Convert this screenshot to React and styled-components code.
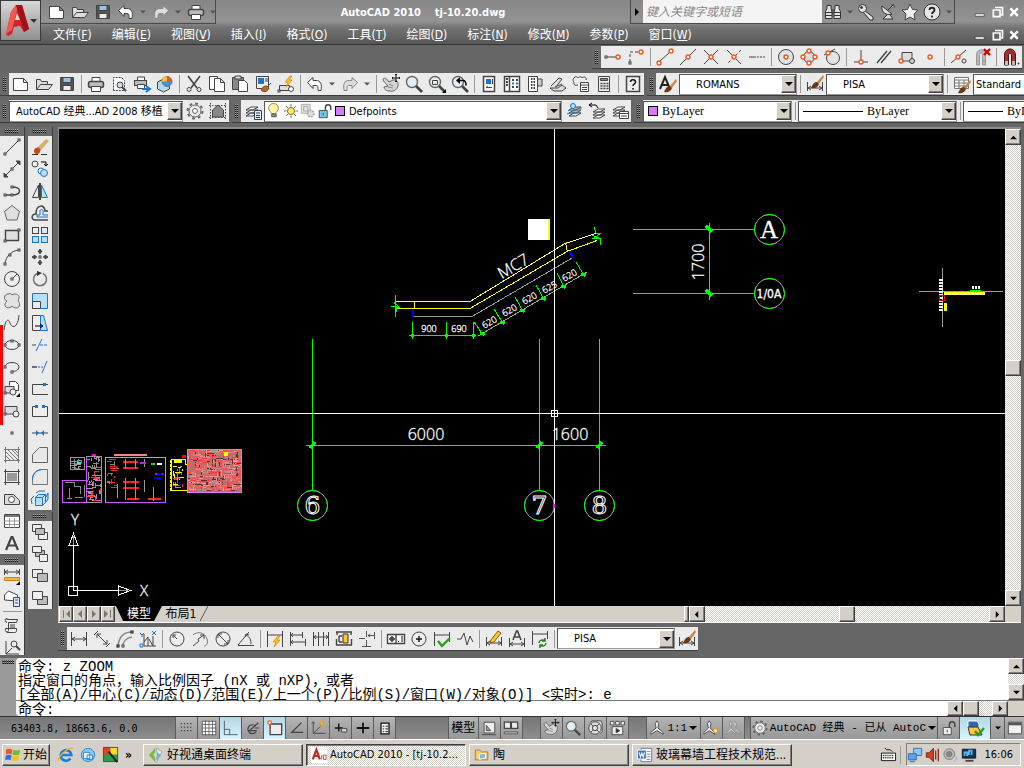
import { Fragment } from 'react'
import styled, { createGlobalStyle, css } from 'styled-components'

const UI = '"DejaVu Sans Condensed", "Noto Sans CJK SC", sans-serif'
const BLUE = '#1a74d0'
const ORANGE = '#f0581c'
const SKY = '#b5e0f7'

const GlobalStyle = createGlobalStyle`
  * { box-sizing: border-box; }
  body { margin: 0; background: #666; overflow: hidden; }
  button, input, select { font-family: inherit; }
`

const raised = css`
  background: #d4d0c8;
  border: 1px solid;
  border-color: #fff #404040 #404040 #fff;
  box-shadow: inset -1px -1px 0 #808080;
`

const dither = css`
  background: conic-gradient(#fff 25%, #d4d0c8 0 50%, #fff 0 75%, #d4d0c8 0) 0 0 / 2px 2px;
`

const gripDots = css`
  background: conic-gradient(#a8a8a8 25%, #111 0 50%, #5a5a5a 0) 0 0 / 2px 2px;
`

const Window = styled.div`
  display: flex;
  flex-direction: column;
  height: 100vh;
  background: #666;
  font-family: ${UI};
  font-size: 11px;
  color: #000;
`

/* ---------- title and menu ---------- */

const Header = styled.header`
  display: flex;
  height: 45px;
  flex: none;
  border-bottom: 1px solid #333;
  background: linear-gradient(#868686, #949494 48%, #747474 62%, #585858);
`

const AppButton = styled.button`
  display: flex;
  align-items: center;
  justify-content: center;
  width: 41px;
  height: 41px;
  padding: 0;
  border: 1px solid #3a3a3a;
  background: linear-gradient(#d8d8d8, #8f8f8f);
`

const HeaderBody = styled.div`
  flex: 1;
  min-width: 0;
`

const TitleRow = styled.div`
  display: flex;
  align-items: stretch;
  height: 24px;
`

const QuickAccess = styled.div`
  display: flex;
  align-items: center;
  width: 175px;
  padding-left: 4px;
  border: 1px solid #4a4a4a;
  border-top: 0;
  border-left: 0;
`

const Title = styled.h1`
  flex: 1;
  margin: 0;
  padding-top: 1px;
  font-size: 11px;
  line-height: 24px;
  text-align: center;
  white-space: pre;
  color: #fff;
`

const SearchBox = styled.div`
  display: flex;
  align-items: center;
  border: 1px solid #4a4a4a;
  border-top: 0;
`

const SearchInput = styled.input`
  width: 179px;
  height: 23px;
  padding: 0 3px;
  border: 0;
  background: #f4f4f4;
  font-size: 12px;
  font-style: italic;

  &::placeholder { color: #888; opacity: 1; }
`

const WindowControls = styled.div`
  display: flex;
  align-items: center;
  gap: 1px;
  padding: 0 2px 0 17px;
`

const MenuRow = styled.nav`
  display: flex;
  align-items: center;
  height: 20px;
  padding: 2px 0 0 12px;
`

const MenuItem = styled.button`
  padding: 0;
  margin-right: 20px;
  border: 0;
  background: none;
  color: #fff;
  font-size: 12px;
  line-height: 18px;
  white-space: nowrap;
`

const Spacer = styled.div`
  flex: 1;
`

/* ---------- toolbars ---------- */

const DockRows = styled.div`
  display: grid;
  gap: 4px;
  flex: none;
  padding: 1px 0 4px;
`

const DockRow = styled.div`
  display: flex;
  justify-content: ${p => (p.$end ? 'flex-end' : 'flex-start')};
  gap: 3px;
  height: 23px;
  padding-right: ${p => (p.$end ? '2px' : '0')};
  overflow: hidden;
`

const Bar = styled.div`
  display: flex;
  flex: none;
  flex-direction: ${p => (p.$vertical ? 'column' : 'row')};
  align-items: center;
  background: #ebebeb;
  border-${p => (p.$vertical ? 'right' : 'bottom')}: 1px solid #3c3c3c;
`

const Grip = styled.div`
  display: flex;
  flex: none;
  align-self: stretch;
  width: ${p => (p.$vertical ? 'auto' : '9px')};
  height: ${p => (p.$vertical ? '9px' : 'auto')};
  padding: ${p => (p.$vertical ? '2px 6px 3px 4px' : '4px 3px 4px 2px')};
  background: #6a6a6a;

  &::before {
    content: '';
    flex: 1;
    ${gripDots}
  }
`

const IconButton = styled.button`
  display: flex;
  flex: none;
  align-items: center;
  justify-content: center;
  width: ${p => p.$w || 23}px;
  height: 22px;
  padding: 0;
  border: 0;
  background: none;
`

const Divider = styled.div`
  flex: none;
  width: ${p => (p.$vertical ? '19px' : '6px')};
  height: ${p => (p.$vertical ? '5px' : '18px')};
  background: linear-gradient(#999, #999) center / ${p => (p.$vertical ? '100% 1px' : '1px 100%')} no-repeat;
`

const Glyph = styled.svg`
  display: block;
  flex: none;
  overflow: visible;
  fill: none;
  stroke: #444;
`

const Combo = styled.div`
  display: flex;
  flex: none;
  align-items: center;
  width: ${p => p.$w}px;
  height: 21px;
  border: 1px solid;
  border-color: #555 #999 #999 #555;
  background: #fff;
`

const ComboSelect = styled.select`
  appearance: none;
  flex: 1;
  min-width: 0;
  height: 19px;
  padding: 0 0 0 ${p => p.$pad || 4}px;
  border: 0;
  outline: 0;
  background: none;
  color: #000;
  font-family: ${p => (p.$serif ? '"Liberation Serif", serif' : 'inherit')};
  font-size: ${p => (p.$serif ? 12 : 11)}px;
`

const Arrow = styled.span`
  display: flex;
  flex: none;
  align-items: center;
  justify-content: center;
  width: 15px;
  height: 18px;
  ${raised}

  &::after {
    content: '';
    border: 4px solid transparent;
    border-bottom: 0;
    border-top-color: #000;
  }
`

const Swatch = styled.span`
  flex: none;
  width: 10px;
  height: 10px;
  margin-left: ${p => p.$gap || 2}px;
  border: 1px solid #000;
  background: #d97bff;
`

const Rule = styled.span`
  flex: none;
  width: ${p => p.$w}px;
  height: 1px;
  margin-left: 4px;
  background: #000;
`

/* ---------- workspace ---------- */

const Workspace = styled.main`
  position: relative;
  display: flex;
  flex: 1;
  min-height: 0;
  overflow: hidden;
  border-bottom: 3px solid #666;
`

const SideDock = styled.div`
  display: flex;
  flex: none;
  flex-direction: column;
  gap: 2px;
  width: 25px;
  margin-right: 3px;
`

const RecordMark = styled.div`
  position: absolute;
  left: 0;
  top: 198px;
  width: 3px;
  height: 100px;
  background: #f00;
`

const Document = styled.section`
  display: flex;
  flex: 1;
  flex-direction: column;
  min-width: 0;
  margin: 0 3px 0 2px;
`

const Frame = styled.div`
  display: flex;
  flex: 1;
  min-height: 0;
  border: solid #8c8c8c;
  border-width: 2px 0 0 1px;
`

const Canvas = styled.svg`
  display: block;
  flex: 1;
  min-width: 0;
  height: 100%;
  background: #000;
  fill: none;
`

const ScrollTrack = styled.div`
  display: flex;
  flex: none;
  flex-direction: ${p => (p.$vertical ? 'column' : 'row')};
  width: ${p => p.$w || 'auto'};
  ${dither}
`

const ScrollButton = styled.button`
  display: flex;
  flex: none;
  align-items: center;
  justify-content: center;
  width: ${p => p.$w || 16}px;
  height: ${p => p.$h || 16}px;
  padding: 0;
  ${raised}
`

const TabRow = styled.div`
  display: flex;
  flex: none;
  height: 17px;
  border-bottom: 1px solid #fff;
  background: #d4d0c8;
`

const TabArrows = styled.div`
  display: flex;
  padding-left: 1px;
`

const Tab = styled.button`
  height: 15px;
  padding: 0;
  border: 0;
  font-size: 12px;
  line-height: 14px;
  ${p => p.$active ? css`
    width: 46px;
    margin-left: 1px;
    clip-path: polygon(0 0, 100% 0, calc(100% - 8px) 100%, 7px 100%);
    background: #000;
    color: #fff;
  ` : css`
    width: 46px;
    padding-right: 8px;
    background: linear-gradient(to bottom right, transparent 44%, #555 50%, transparent 56%) right / 8px 15px no-repeat;
    color: #000;
  `}
`

const Splitter = styled.div`
  width: 5px;
  ${raised}
`

const Corner = styled.div`
  width: ${p => p.$w || 16}px;
  background: #d4d0c8;
`

const DimensionDock = styled.div`
  display: flex;
  flex: none;
  height: 24px;
  margin: 4px 0;
`

/* ---------- command line ---------- */

const Command = styled.section`
  display: flex;
  flex: none;
  height: 58px;
  background: #9a9a9a;
`

const CommandGrip = styled.div`
  flex: none;
  width: 16px;
  padding: 2px;

  &::before {
    content: '';
    display: block;
    height: 4px;
    ${gripDots}
  }
`

const CommandBody = styled.div`
  flex: 1;
  min-width: 0;
  background: #fff;
  border-radius: 4px 0 0 4px;
`

const History = styled.div`
  display: flex;
  height: 43px;
  border-bottom: 1px solid #777;
`

const HistoryText = styled.div`
  flex: 1;
  padding-left: 2px;
`

const Line = styled.p`
  display: flex;
  align-items: baseline;
  margin: 0;
  height: 14px;
  line-height: 14px;
  white-space: pre;
`

const Han = styled.span`
  font-family: "Noto Sans CJK SC", sans-serif;
  font-size: 14px;
`

const Latin = styled.span`
  font-family: "Liberation Mono", monospace;
  font-size: 14px;
`

const Prompt = styled.div`
  display: flex;
  height: 15px;
  padding-left: 2px;
  line-height: 15px;
`

const PromptInput = styled.input`
  flex: 1;
  min-width: 0;
  border: 0;
  outline: 0;
  background: none;
`

/* ---------- status bar ---------- */

const StatusBar = styled.footer`
  display: flex;
  flex: none;
  height: 23px;
  border-top: 1px solid #333;
  background: linear-gradient(#767676, #8e8e8e);
`

const Coordinates = styled.output`
  width: 175px;
  padding-left: 11px;
  font: 10px/24px "DejaVu Sans Mono", monospace;
`

const StatusButton = styled.button`
  display: flex;
  flex: none;
  align-items: center;
  justify-content: center;
  gap: 2px;
  min-width: ${p => p.$w || 22}px;
  padding: 0 1px;
  border: 0;
  border-left: 1px solid #5c5c5c;
  background: ${p => (p.$on ? 'linear-gradient(#b5d6e4, #d8f4ff)' : 'linear-gradient(#b4b4b4, #979797)')};
  font-size: 12px;
  line-height: 20px;
  white-space: nowrap;
`

const StatusGap = styled.div`
  flex: ${p => (p.$grow ? 1 : 'none')};
  width: ${p => p.$w || 0}px;
  border-left: 1px solid #5c5c5c;
`

const MonoLabel = styled.span`
  font-family: "Liberation Mono", "Noto Sans CJK SC", monospace;
  font-size: 11px;
`

/* ---------- taskbar ---------- */

const Taskbar = styled.footer`
  display: flex;
  flex: none;
  align-items: center;
  height: 29px;
  padding: 1px 3px 0 2px;
  border-top: 1px solid #fff;
  background: #d4d0c8;
  font-size: 12px;
`

const StartButton = styled.button`
  display: flex;
  align-items: center;
  gap: 1px;
  width: 48px;
  height: 22px;
  padding: 0 2px;
  font-size: 12px;
  line-height: 18px;
  white-space: nowrap;
  ${raised}
`

const QuickLaunch = styled.div`
  display: flex;
  align-items: center;
  gap: 6px;
  width: 93px;
  padding-left: 8px;
`

const Task = styled.button`
  display: flex;
  align-items: center;
  gap: 3px;
  flex: 0 1 160px;
  min-width: 0;
  height: 22px;
  margin-right: 3px;
  padding: 0 4px;
  overflow: hidden;
  font-size: ${p => (p.$latin ? 11 : 12)}px;
  line-height: 18px;
  white-space: nowrap;
  ${raised}
  ${p => p.$active && css`
    ${dither}
    border-color: #404040 #fff #fff #404040;
    box-shadow: inset 1px 1px 0 #808080;
  `}
`

const Tray = styled.div`
  display: flex;
  align-items: center;
  gap: 2px;
  height: 23px;
  margin-left: 3px;
  padding: 0 7px 0 0;
  border: 1px solid;
  border-color: #808080 #fff #fff #808080;
`

const Clock = styled.time`
  padding-left: 5px;
  font-size: 11px;
`

/* ---------- icons, all on an 18x18 grid ---------- */

const dot = (x, y, c = '#444', r = 1) => (
  <rect x={x - r} y={y - r} width={r * 2} height={r * 2} fill="#fff" stroke={c} />
)
const ring = (x, y, r = 2) => <circle cx={x} cy={y} r={r} fill="#fff" stroke={ORANGE} strokeWidth="1.4" />
const stack = (x = 0) => (
  <g transform={`translate(${x} 0)`} fill="#fff">
    <path d="M4 14l5-3h7l-5 3zM4 11l5-3h7l-5 3zM4 8l5-3h7l-5 3z" />
  </g>
)
const dimBar = (y = 14) => <path d={`M1.5 ${y - 6}v9M16.5 ${y - 6}v9M2 ${y}h14M5 ${y - 2}l-3 2 3 2M13 ${y - 2}l3 2-3 2`} />
const brush = (
  <g stroke="none">
    <path d="M17 0l-6 7 2 2 5-7z" fill="#c98a48" />
    <path d="M11 7c-3 0-4 2-6 6 4 1 7-1 8-4z" fill="#6a3814" />
  </g>
)
const bolt = <path d="M13 1L8 7h3l-2 5 6-7h-3l3-4z" fill="#ffc629" stroke="#e07b00" strokeWidth=".7" />
const lens = <g><circle cx="7" cy="7" r="5.5" fill="#e4eef4" stroke="#666" strokeWidth="1.4" /><path d="M11 11l6 6" strokeWidth="2.6" /></g>

const icons = {
  new: <path d="M1.5 15.5v-12h10l4 4v8zM11.5 3.5v4h4" fill="#fff" />,
  open: <path d="M1.5 14.5v-10h4l1 2h6v3M1.5 14.5l4-5h12l-4 5z" fill="#ddd" />,
  save: <g><path d="M2.5 2.5h13v13h-13z" fill="#555" /><path d="M5 2.5h8v5h-8z" fill="#9cc3dc" /><path d="M5 10.500h8v5h-8z" fill="#eee" /></g>,
  print: <g><path d="M5 6V2.500h8V6" fill="#fff" /><rect x="1.500" y="6.500" width="15" height="6" rx="2" fill="#bbb" strokeWidth="1.500" /><path d="M4.500 11.500h9v5h-9z" fill="#fff" /></g>,
  preview: <g><path d="M3.500 15.500v-13h8l3 3v10z" fill="#fff" strokeDasharray="2 1" /><circle cx="10" cy="10" r="3" fill="#cde" /><path d="M12 12l4 4" strokeWidth="2" /></g>,
  publish: <g><rect x="1.500" y="5.500" width="12" height="5" fill="#bbb" /><path d="M4.500 5v-3h7v3M4.500 9.500h7v4h-7z" fill="#fff" /><path d="M9 14h7M13 11l4 3-4 3" stroke={BLUE} strokeWidth="2" /></g>,
  dwf: <g><path d="M1.500 7l6-3 6 3v7l-6 3-6-3z" fill="#b5d8ec" /><circle cx="11" cy="6.500" r="5" fill="#3a9ad8" stroke="#777" /><path d="M11 6.500V1.500a5 5 0 0 1 5 5z" fill="#f05030" stroke="none" /><path d="M11 6.500H6a5 5 0 0 1 5-5z" fill="#ffc629" stroke="none" /></g>,
  cut: <g><path d="M3 1l9 12M15 1L6 13" strokeWidth="1.600" /><circle cx="4" cy="14.500" r="2" /><circle cx="14" cy="14.500" r="2" /></g>,
  copyclip: <g fill="#fff"><path d="M1.500 1.500h8v13h-8z" /><path d="M6.500 3.500h6l4 4v9h-10zM12.500 3.500v4h4" /></g>,
  paste: <g><path d="M1.500 2.500h11v12h-11z" fill="#888" /><path d="M4 1h6v3h-6z" fill="#ddd" /><path d="M7.500 5.500h6l3 3v8h-9z" fill="#fff" /></g>,
  match: <g><path d="M2.500 1.500h12v12h-12z" fill="#eee" /><path d="M4 3h6v6h-6z" fill={BLUE} stroke="none" /><path d="M11 4h3M11 6h3" /><path d="M17 8l-4 4M13 11c-4 0-5 2-6 4 2 2 6 3 8-2z" fill="#b5672d" stroke="#864818" /></g>,
  blockedit: <g><path d="M2.500 15.500v-5h10v5z" fill="#ddd" /><circle cx="14" cy="14" r="2.500" fill="#fff" />{dot(2, 16)}{bolt}</g>,
  undo: <path d="M1.500 7.500l5.500-5v3h3c5 0 6 4 5 10h-3c0-4 0-5-2-5H7v3z" fill="#fff" />,
  redo: <path d="M16.500 7.500l-5.500-5v3H8c-5 0-6 4-5 10h3c0-4 0-5 2-5h3v3z" fill="#ddd" stroke="#888" />,
  pan: <g><path d="M1 4c2-2 4 0 6 3l4-2c3-1 6 2 5 6-1 4-5 6-9 5-4 0-5-3-5-4l4-1C4 8 1 7 1 4z" fill="#d4d4d4" strokeWidth="1" stroke="#666" /><path d="M7 9l4 2M6 12l5 1" stroke="#888" /><path d="M14 -1v8M10 3h8M13 0l1-1 1 1M13 6l1 1 1-1M11 2l-1 1 1 1M17 2l1 1-1 1" stroke="#111" /></g>,
  zoom: lens,
  zoomwin: <g>{lens}<path d="M4.500 5.500h5v4h-5z" /><path d="M18 14v4h-4z" fill="#000" stroke="none" /></g>,
  zoomprev: <g>{lens}<path d="M7 5.500h5c2 0 3 2 3 5" stroke="#000" strokeWidth="1.500" /><path d="M9 2v7L5 5.500z" fill="#000" stroke="none" /></g>,
  props: <g><path d="M3.500 1.500h11v15h-11z" fill="#fff" strokeWidth="1.500" /><path d="M6 4h5v5h-5z" fill={BLUE} stroke="none" /><path d="M12.500 4v5M6 12.500h6M6 12.500l2-1" /></g>,
  design: <g><path d="M1.500 1.500h15v15h-15zM6.500 1.500v15" fill="#fff" strokeWidth="1.500" /><path d="M3 4h2M3 7h2M3 10h2M9 5h2M13 5h2M9 12h2M13 12h2" strokeWidth="2" /><path d="M9 8.500h2M13 8.500h2" stroke={BLUE} strokeWidth="2" /></g>,
  palettes: <g><path d="M2.500 1.500h9v15h-9z" fill="#fff" /><path d="M5 4h4M5 7h4M5 10h4M5 13h4" strokeDasharray="1.500 1" strokeWidth="2" /><path d="M12 4h4v7h-4" fill="#ccc" /></g>,
  sheets: <path d="M1 13l4 3h8l4-3-4-3-4 3zM2 11l8-8 3 1-6 8M6 12l7-3" fill="#ddd" />,
  markup: <g><path d="M2 3c2-3 4 0 4 0s3-3 4 0c2-2 5-1 4 2M2 3c-2 2 0 4 0 5s0 3 4 2" /><path d="M8.500 7.500h8v9h-8zM8.500 10h8M10 12.500h5M10 14.500h5" fill="#fff" /></g>,
  calc: <g><path d="M3.500 1.500h11v15h-11z" fill="#eee" /><path d="M5.500 3.500h7v2h-7z" fill="#888" /><path d="M5.500 8.500h8M5.500 11h8M5.500 13.500h8" strokeWidth="1.600" strokeDasharray="2 1" /></g>,
  help: <g><path d="M2.500 1.500h13v15h-13z" fill="#eee" strokeWidth="1.500" /><path d="M6.500 7c0-3 5-3 5 0 0 2-2.500 2-2.500 4M9 13v1.500" stroke="#111" strokeWidth="1.600" /></g>,
  textstyle: <g><path d="M1 14L6 2l5 12M3 10h6" strokeWidth="2" stroke="#222" /><g transform="translate(0 4)">{brush}</g></g>,
  dimstyle: <g>{dimBar(13)}{brush}</g>,
  tablestyle: <g><path d="M1.500 2.500h14v11h-14zM1.500 5h14M1.500 8h14M1.500 11h14M6 5v9M11 5v9" fill="#fff" stroke="#777" /><g transform="translate(0 5)">{brush}</g></g>,
  gear: <g><circle cx="9" cy="9" r="7.500" strokeDasharray="2.800 3.090" strokeWidth="2" stroke="#666" /><circle cx="9" cy="9" r="6" fill="#eee" stroke="#666" /><circle cx="9" cy="9" r="2.500" fill="#fff" stroke="#666" /></g>,
  home: <g><path d="M3.500 8L9 3l5.500 5v7h-11z" fill="#888" /><path d="M1.500 1v16M16.500 1v16M0 3.500h18M0 15.500h18" strokeDasharray="1.500 1.500" /></g>,
  layerprops: <g>{stack(-2)}<path d="M10.500 8.500h7v9h-7zM12 11h4M12 13.500h4M12 15.500h4" fill="#dfeaf5" stroke="#345" /></g>,
  layermatch: <g>{stack()}<path d="M3 9l5-3h9M2 12l5-2h8" stroke={BLUE} /><circle cx="8" cy="4" r="2.500" fill={SKY} stroke={BLUE} /></g>,
  layerprev: <g transform="translate(1 2)">{stack()}<path d="M0 1h7l2 3M3-1L0 1l3 2" stroke="#000" /></g>,
  layerstate: <g>{stack(-2)}<path d="M8.500 9.500h9v7h-9zM8.500 11.500h9M10 14h6" fill="#fff" /></g>,
  bulb: <g><path d="M6 12c0-2-3-3-3-6a5 5 0 0 1 11 0c0 3-3 4-3 6z" fill="#fff3a0" stroke="#8a8050" /><path d="M6.500 12.500h5v3h-5z" fill="#999" /></g>,
  sun: <g stroke="#6a6238"><circle cx="9" cy="9" r="4" fill="#ffe95e" /><path d="M9 1v3M9 14v3M1 9h3M14 9h3M3.500 3.500l2 2M12.500 12.500l2 2M14.500 3.500l-2 2M3.500 14.500l2-2" /></g>,
  vpfreeze: <g stroke="#aaa" fill="#e0e0e0"><path d="M1.500 1.500h10v10h-10zM4 4h5v5h-5z" /><circle cx="12" cy="12" r="3.500" strokeDasharray="2 1" strokeWidth="2" /></g>,
  unlock: <g><path d="M2.500 8.500h9v8h-9z" fill="#74c8f0" /><path d="M9.500 8V5c0-4 6-4 6 0v3" strokeWidth="1.600" /><path d="M7 11v3" /></g>,

  track: <g><path d="M2 9h10" />{dot(2, 9)}{ring(14, 9)}</g>,
  from: <g><path d="M3 14V4h9" strokeDasharray="3 2" />{dot(3, 15)}{ring(14, 4)}</g>,
  endpoint: <g><path d="M3 14L15 3" />{ring(3, 15)}{ring(15, 3)}</g>,
  midpoint: <g><path d="M1 17L17 1" />{ring(9, 9)}</g>,
  intersect: <g><path d="M2 2l14 14M16 2L2 16" />{ring(9, 9)}</g>,
  apparent: <g><path d="M2 2l14 14" /><path d="M16 2L2 16" strokeDasharray="3 2" />{ring(9, 9)}</g>,
  extension: <g><path d="M1 9h7" /><path d="M9 9h8" strokeDasharray="2 1" /></g>,
  center: <g><circle cx="9" cy="9" r="7.500" fill="#dfe3e6" />{ring(9, 9)}</g>,
  quadrant: <g><circle cx="9" cy="9" r="5.500" fill="#ddd" />{ring(9, 3)}{ring(9, 15)}{ring(3, 9)}{ring(15, 9)}</g>,
  tangent: <g><circle cx="10" cy="10" r="6.500" fill="#e4e4e4" /><path d="M1 7l11-6" />{ring(5, 5)}</g>,
  perp: <g><path d="M9 2v12M2 14h14" />{ring(9, 14)}</g>,
  parallel: <path d="M2 15L12 3M6 15L16 3" strokeWidth="1.400" />,
  insertion: <g><path d="M4 12V4.500h10V11" fill="#ddd" /><path d="M4 13h7" />{ring(3, 13)}<circle cx="14" cy="13" r="2.500" fill="#ccc" /></g>,
  node: ring(9, 9),
  nearest: <g><path d="M1 15l7-6 8-7" />{ring(8, 9)}<circle cx="14" cy="13" r="2" /></g>,
  nosnap: <g stroke="#999"><path d="M3.500 17V7c0-7 9-7 9 0v10h-3V7c0-3-3-3-3 0v10z" fill="#bbb" /><path d="M3 13h4M9 13h4" /><path d="M11 1l6 6M17 1l-6 6" stroke="#d40000" strokeWidth="2.400" /></g>,
  magnet: <g><path d="M2.500 17V7c0-8 11-8 11 0v10h-4V7c0-2-3-2-3 0v10z" fill="#a03030" stroke="#4a1515" /><path d="M3 13h3v4H3zM10 13h3v4h-3z" fill="#bbb" stroke="none" /><path d="M16 15h1v1h-1z" /></g>,

  line: <g><path d="M2 16L16 2" />{dot(2, 16)}{dot(16, 2)}</g>,
  xline: <g><path d="M2 16L16 2" /><path d="M1 17v-4l4 4zM17 1v4l-4-4z" fill="#444" />{dot(9, 9)}</g>,
  pline: <g><path d="M2 13h7c10 0 10-8 0-8" strokeWidth="1.400" />{dot(2, 13)}{dot(9, 13)}{dot(9, 5)}</g>,
  polygon: <path d="M9 1.500l7.500 6L14 16H4L1.500 7.500z" fill="#dfdfdf" stroke="#666" />,
  rect: <g><path d="M2.500 4.500h13v10h-13z" fill="#dfe0e2" strokeWidth="1.400" />{dot(2, 15)}{dot(16, 4)}</g>,
  arc: <g><path d="M2 16C3 8 8 3 16 2" />{dot(2, 16)}{dot(7, 7)}{dot(16, 2)}</g>,
  circle: <g><circle cx="9" cy="9" r="7.500" fill="#eee" /><path d="M9 9l5-5" />{dot(9, 9)}</g>,
  cloud: <path d="M5 2c2-1 4 0 4 1 2-2 8-1 7 3 0 1-1 2-1 3 2 1 3 7-2 7-2 0-3-1-4-2-2 3-8 2-7-2 0-1 1-2 2-3C0 8 1 2 5 2z" fill="#e2e2e2" stroke="#666" />,
  spline: <path d="M1 16C2 7 5 3 7 9s8 5 9-8" />,
  ellipse: <g><ellipse cx="9" cy="9" rx="7" ry="4.500" fill="#eee" />{dot(2, 9)}{dot(16, 9)}{dot(9, 5)}</g>,
  ellipsearc: <g><path d="M2 9c0-6 14-6 14 0 0 3-4 5-7 4" />{dot(2, 9)}{dot(9, 14)}</g>,
  insert: <g><path d="M6.500 5.500v-4h6l3 3v6h-4" fill="#fff" /><path d="M2 13V6.500h9V13z" fill="#ddd" /><circle cx="10" cy="12" r="3" fill="#eee" />{dot(2, 13)}<path d="M17 13v4h-4z" fill="#000" stroke="none" /></g>,
  block: <g><path d="M2 12V4.500h12V10M2 12h8" fill="#ddd" /><circle cx="13" cy="12" r="3" fill="#eee" />{dot(2, 12)}</g>,
  point: dot(9, 9),
  hatch: <g><path d="M2.500 1v16M15.500 1v16M1 3.500h16M1 14.500h16" stroke="#777" /><path d="M3 6l8 8M3 10l4 4M5 4l10 10M9 4l6 6M12 4l3 3" strokeWidth=".7" /></g>,
  gradient: <g><path d="M4 5h10v8H4z" fill="#999" stroke="none" /><path d="M2.500 1v16M15.500 1v16M1 3.500h16M1 14.500h16" /></g>,
  region: <g><path d="M1.500 14.500v-10h9l6 6v4z" fill="#ddd" /><circle cx="8.500" cy="9.500" r="3" fill="#fff" /></g>,
  table: <g><path d="M1.500 2.500h15v13h-15z" fill="#fff" /><path d="M2 3h14v2H2z" fill="#777" stroke="none" /><path d="M1.500 9h15M1.500 12.500h15M6.500 6v10M11.500 6v10" stroke="#999" /></g>,
  text: <path d="M3 16L8.500 3h1L15 16M5.500 11.500h7" strokeWidth="2.200" />,
  distance: <g><path d="M1.500 2v6M16.500 2v6M2 5h14M5 3L2 5l3 2M13 3l3 2-3 2" /><path d="M1.500 10.500h15v3h-15z" fill="#f7b640" stroke="#d08010" /><path d="M17 14v4h-4z" fill="#000" stroke="none" /></g>,
  area: <g><path d="M1.500 11V6l4-4 9 4v6z" fill="#fff" /><path d="M10.500 8.500h6v9h-6zM12 11h3M12 14h3" fill="#dfeaf5" stroke="#347" /></g>,
  list: <path d="M3.500 3.500h11l-1 3h-8v8c0 2-3 2-3 0v-2h11v2c0 2-1 2-3 2H4M5 3.500c-3-3-4 2-1 3M7 9h5M7 11h5" fill="#eee" />,
  locate: <g><path d="M3 3v13h13M3 16l6-6" /><circle cx="11" cy="6" r="3" /><path d="M13 8l4 4" strokeWidth="2" /></g>,

  erase: <g stroke="none"><path d="M15 1l3 2-8 9-3-3z" fill="#d9b060" /><path d="M7 9l3 3-2 2-4-3z" fill="#6a6a5a" /><circle cx="6" cy="13" r="3" fill="#cf4514" /><path d="M1 16.500h16" stroke="#333" strokeDasharray="6 3" /></g>,
  copy: <g><circle cx="4" cy="4" r="3" /><path d="M10 2h5v3M13 4l2 2 2-2" stroke="#000" /><circle cx="10" cy="11" r="3" fill="#fff" stroke={BLUE} /><circle cx="13" cy="13" r="3.500" fill={SKY} stroke={BLUE} /></g>,
  mirror: <g><path d="M7.500 3v12.500H1.500z" fill="#eee" /><path d="M10.500 3v12.500h6z" fill={SKY} stroke={BLUE} /><path d="M9 1v17" stroke="#000" strokeWidth="1.400" /></g>,
  offset: <g><path d="M17 16H4c-4 0-4-6 1-6C5 0 14 0 14 7h3" strokeWidth="1.500" /><path d="M17 13H6v-2h3V7c0-2 3-2 3 0v4h5" stroke={BLUE} /></g>,
  array: <g><rect x="1.500" y="1.500" width="6" height="6" fill="#eee" /><rect x="10.500" y="1.500" width="6" height="6" fill="#dde8f0" /><rect x="1.500" y="10.500" width="6" height="6" fill={SKY} stroke={BLUE} /><rect x="10.500" y="10.500" width="6" height="6" fill={SKY} stroke={BLUE} /></g>,
  move: <g fill="#444"><path d="M9 1l2 3H7zM9 17l2-3H7zM1 9l3-2v4zM17 9l-3-2v4z" /><path d="M9 3v3M9 12v3M3 9h3M12 9h3" strokeWidth="1.600" />{dot(9, 9)}</g>,
  rotate: <g><path d="M12 3.500a6.500 6.500 0 1 1-6 0" stroke="#777" strokeWidth="1.600" /><path d="M6 1v5l5-3z" fill="#333" stroke="none" /></g>,
  scale: <g><path d="M1.500 1.500h15v15h-15z" fill={SKY} stroke={BLUE} /><path d="M1.500 9.500h8v7h-8z" fill="#e8e8f0" /></g>,
  stretch: <g><path d="M1.500 1.500h8v15h-8z" fill="#eee" /><path d="M9.500 1.500h3l4 15h-7z" fill={SKY} stroke={BLUE} /><path d="M4 12h7M9 10l3 2-3 2" stroke="#000" /></g>,
  trim: <g><path d="M1 9h4" /><path d="M5 15l6-12" stroke={BLUE} /><path d="M9 9h8" stroke={BLUE} strokeDasharray="3 1" /></g>,
  extend: <g><path d="M1 9h5" strokeWidth="1.500" /><path d="M7 9h5" stroke={BLUE} strokeDasharray="2 1" /><path d="M11 15l5-12" stroke={BLUE} /></g>,
  breakpt: <g><path d="M17 4.500H1.500v10H17" /><path d="M12 3h3v3h-3z" fill={BLUE} stroke="none" /></g>,
  break: <g><path d="M4 4.500H1.500v10h15v-10H14" fill="#eee" /><path d="M4 3h3v3H4zM11 3h3v3h-3z" fill={BLUE} stroke="none" /></g>,
  join: <g><path d="M1 9h16" /><path d="M5 6l3 3-3 3zM13 6l-3 3 3 3z" fill={BLUE} stroke="none" /></g>,
  chamfer: <path d="M1.500 16.500v-8l7-7h8v15z" fill="#e8e8e8" stroke="#666" />,
  fillet: <g><path d="M1.500 16.500v-6c0-5 4-9 9-9h6v15z" fill="#e8e8e8" stroke="#777" /><path d="M1.500 12c0-6 4-10 10-10.500" stroke={BLUE} /></g>,
  explode: <g fill={SKY} stroke={BLUE}><path d="M4.500 7.500h7v8h-7zM4.500 7.500l3-3h7l-3 3M11.500 15.500l3-3v-8" /><path d="M1 14l-1-5 3-3M15 7l2-4v6l-2 3M5 3l3-2h6" /></g>,
  front: <g fill="#eee"><path d="M1.500 1.500h9v7h-9z" /><path d="M7.500 9.500h9v7h-9z" /><path d="M4.500 5.500h9v6h-9z" fill="#bbb" /></g>,
  back: <g fill="#eee"><path d="M4.500 5.500h9v6h-9z" fill="#bbb" /><path d="M1.500 1.500h9v6h-9z" /><path d="M8.500 9.500h8v7h-8z" /></g>,
  above: <g fill="#eee"><path d="M1.500 2.500h10v8h-10z" /><path d="M6.500 6.500h10v8h-10z" fill="#bbb" /></g>,
  under: <g fill="#bbb"><path d="M6.500 7.500h10v8h-10z" /><path d="M1.500 2.500h10v8h-10z" fill="#eee" /></g>,

  dlinear: <path d="M1.500 2v14M16.500 2v14M2 9h14M5 7L2 9l3 2M13 7l3 2-3 2" />,
  daligned: <g><path d="M4 4l10 10M4 8V4h4M14 10v4h-4" /><path d="M5 1L1 5M17 13l-4 4" /></g>,
  darc: <g><path d="M2 16C3 7 8 2 16 2M7 16c0-4 3-8 9-9" stroke="#888" strokeWidth="1.500" />{dot(2, 16, '#111')}{dot(16, 2, '#111')}{dot(7, 16)}</g>,
  dordinate: <g><path d="M5 4v12h12M5 12l4-5v9M10 9l4 7V6" /><path d="M1 3l2 2 2-2M3 5v2M1 14h3v3H1zM13 1l4 4M17 1l-4 4" stroke={BLUE} /></g>,
  dradius: <g><circle cx="9" cy="9" r="7" fill="#eee" /><path d="M9 9L5 5M5 8V5h3" /></g>,
  djog: <g><path d="M2 5c4-4 12-3 14 4s-3 7-3 7" stroke="#777" /><path d="M2 16l6-5-1-2 6-4M9 5h4v4" /></g>,
  ddiameter: <g><circle cx="9" cy="9" r="7" fill="#eee" /><path d="M4 4l10 10M4 8V4h4M14 10v4h-4" /></g>,
  dangular: <path d="M1 15.500h16M1 15L12 2M9 5c4 2 5 5 5 9M8 7l1-3 3 1" />,
  dquick: <g><path d="M1.500 1v16M16.500 1v16M2 5h14" /><g transform="translate(-1 5)">{bolt}</g></g>,
  dbaseline: <path d="M1.500 2v14M13.500 2v6M16.500 9v7M2 5h11M2 12h14M4 3L2 5l2 2M4 10l-2 2 2 2" />,
  dcontinue: <path d="M1.500 2v14M6.500 2v14M11.500 2v14M16.500 2v14M2 7h14M4 5L2 7l2 2M14 5l2 2-2 2" />,
  dspace: <g><path d="M1 2h16M1 15h16M2 2v3M16 2v3M4 6v6M4 6h3M4 12h3M1.500 9V15M16.500 9v6" strokeWidth="1.400" /><path d="M8 4h5v9H8z" fill="#ffc629" stroke="#333" /></g>,
  dbreak: <g><path d="M8.500 1v6M8.500 10v7M4 16.500h9M1 8.500h6M10 5.500h6M16.500 2v7M12 4l-2 1.500 2 1.500" stroke="#555" /></g>,
  tolerance: <g><path d="M.500 4.500h17v9h-17zM9 4.500v9" strokeWidth="1.400" fill="#fff" /><circle cx="5" cy="9" r="2" /><path d="M5 6v6M2 9h6M11 11.500h1M15 6v6" stroke="#111" /></g>,
  centermark: <g><circle cx="9" cy="9" r="7" fill="#eee" /><path d="M9 6v6M6 9h6" stroke="#111" strokeWidth="1.400" /></g>,
  inspect: <g><path d="M1.500 2v14M16.500 2v10M2 5h14" /><path d="M5 11l4 5 8-8" stroke="#2d9a20" strokeWidth="2.400" /></g>,
  jogline: <path d="M1 9h4l3-6 3 12 3-9 3 6" />,
  dimedit: <g>{dimBar(13)}<path d="M6 10l7-9 3 2-7 9-4 1z" fill="#ffc629" stroke="#8a5a10" /></g>,
  dimtext: <g>{dimBar(14)}<path d="M5 10L8.500 1h1L13 10M6 7h6" strokeWidth="1.600" /></g>,
  dimupdate: <g><path d="M1.500 1v14M16.500 1v8M2 4h14" /><path d="M8 13c0-3 4-4 6-2M15 13c0 3-4 4-6 2M14 8v3h-3M9 18v-3h3" stroke="#2c7a22" strokeWidth="1.400" /></g>,

  snap: <path d="M2 4h12M2 8h12M2 12h12" strokeDasharray="1.500 2" strokeWidth="1.500" />,
  grid: <path d="M1.500 1.500h15v15h-15zM5 1v16M9 1v16M13 1v16M1 5h16M1 9h16M1 13h16" fill="#fff" stroke="#444" strokeWidth=".8" />,
  ortho: <path d="M1.500 1v15.500h15M1.500 10.500h6v6" stroke="#456" />,
  polar: <path d="M16 9h-5M15 3L5 12h8M12 7a5 5 0 1 0 1 5" strokeWidth="1.400" />,
  osnap: <g><path d="M3.500 4.500h13v12h-13z" fill="#eee" strokeWidth="1.500" />{ring(3, 3)}</g>,
  otrack: <path d="M14 3L3 14h13" strokeWidth="1.400" />,
  ducs: <g><path d="M2.500 2v13h14M2.500 15L12 6M1 4l1.500-2L4 4" /><g transform="translate(3 -1) scale(.8)">{bolt}</g></g>,
  dyn: <g><path d="M2 9h9M6.500 4v9" strokeWidth="1.600" stroke="#111" /><path d="M9.500 9.500h6v4h-6z" fill="#ccc" /></g>,
  lwt: <path d="M2 9h14M9 3v12" stroke="#111" strokeWidth="2" />,
  qp: <g><path d="M4.500 3.500h9v12h-9z" fill="#eee" stroke="#111" strokeWidth="1.400" /><path d="M6.500 7h1.500M6.500 10h1.500M6.500 13h1.500M9.500 7h3M9.500 10h3M9.500 13h3" stroke="#111" /></g>,
  layout: <path d="M3.500 2.500h12v12h-12zM1 16.500h16M6 6v6h5z" fill="#eee" />,
  views: <g><path d="M1.500 2.500h7v7h-7zM9.500 2.500h7v7h-7z" fill="#eee" strokeWidth="1.400" /><path d="M1.500 13.500h15v2h-15z" fill="#eee" /></g>,
  wheel: <g fill="#ddd"><path d="M3 3l3-2h10l1 3v9l-3 3" /><circle cx="9" cy="9" r="7" /><circle cx="9" cy="9" r="3" /><path d="M4 4l3 3M14 4l-3 3M4 14l3-3M14 14l-3-3" /></g>,
  motion: <g fill="#eee"><path d="M1.500 1.500h4v4h-4zM7.500 1.500h4v4h-4zM13.500 1.500h4v4h-4zM3.500 7.500h12v9h-12z" /><path d="M8 9.500v5l4-2.500z" fill="#222" /></g>,
  anno: <path d="M9 1l2 3-1 5 6 5v2l-7-4-7 4v-2l6-5-1-5z" fill="#eee" />,
  annostar: <g><path d="M7 1l2 3-1 5 5 5v2l-6-4-6 4v-2l5-5-1-5z" fill="#eee" /><circle cx="14" cy="12" r="2.500" fill="#ffe070" stroke="#f08020" /></g>,
  annoauto: <path d="M6 1l2 3-1 5 5 5v2l-5-4-5 4v-2l4-5-1-5zM10 1l3 3-1 5 5 5v2l-4-3" fill="#ccc" stroke="#888" />,
  lock: <g><path d="M2.500 8.500h9v8h-9z" fill="#eee" /><path d="M9.500 8V5c0-4 6-4 6 0v3" strokeWidth="1.600" /><path d="M7 11v3" /></g>,
  drawing: <g><path d="M2 2h9l2 3v5H2z" fill="#2c68b8" stroke="#fff" /><path d="M2 8h10l4 8H4z" fill="#f8c93a" stroke="#333" /><path d="M9 12l3 4 6-7" stroke="#2d9a20" strokeWidth="2.400" /></g>,
  clean: <g><path d="M1.500 2.500h15v13h-15z" fill="#f2f2f2" /><path d="M2 3h14v3H2z" fill="#555" stroke="none" /></g>,

  binoculars: <g fill="#e0e0e0" stroke="#333"><path d="M3 2.500h4v3l1 3v7H1.500v-7l1.500-3zM11 2.500h4v3l1.500 3v7H10v-7l1-3zM8 7h2v3H8zM1.500 9.500H8M10 9.500h6.500M1.500 12.500H8M10 12.500h6.500" /></g>,
  key: <g fill="#e0e0e0" stroke="#333"><path d="M8 8l8 6v3h-3l-7-8" /><circle cx="5.500" cy="5.500" r="4" /><circle cx="4.500" cy="4.500" r="1" fill="#333" /></g>,
  satellite: <g fill="#e0e0e0" stroke="#333"><path d="M3 3c-1 6 4 10 10 8zM8 12l-4 4h10l-3-4" /><path d="M8 8l6-6M12 2h3v3" /></g>,
  star: <path d="M9 1l2.500 5.500 5.500.500-4 4 1 6-5-3-5 3 1-6-4-4 5.500-.500z" fill="#f2f2f2" stroke="#444" />,
  helpround: <g><circle cx="9" cy="9" r="8" fill="#e8e8e8" stroke="#333" /><path d="M6.500 7c0-3 5-3 5 0 0 2-2.500 2-2.500 4M9 12.500v2" stroke="#222" strokeWidth="1.800" /></g>,
  min: <path d="M2.500 10.500h11v3h-11z" fill="#fff" />,
  restore: <g stroke="#fff" strokeWidth="2"><path d="M7 4V3h8v9h-2" /><path d="M4 6h8v8H4z" /></g>,
  close: <path d="M4 4l9 9M13 4l-9 9" stroke="#fff" strokeWidth="3" />,

  windows: <g stroke="none"><path d="M1 4c3-2 5-1 7 0l-1 5c-2-1-4-1-6 0z" fill="#ee5b22" /><path d="M9 4c3 1 5 1 7 0l-1 5c-2 1-4 1-7 0z" fill="#6ebd2c" /><path d="M1 10c2-1 4-1 6 0l-1 5c-2-1-4-1-6 0z" fill="#2c72dc" /><path d="M8 10c3 1 5 1 7 0l-1 5c-2 1-4 1-7 0z" fill="#f8c018" /></g>,
  ie: <g><path d="M14 13a6 6 0 1 1 1-4H4" stroke="#1c7fe0" strokeWidth="3" /><path d="M1 16C-2 12 12-1 17 2" stroke="#f4b020" strokeWidth="1.500" /></g>,
  outlook: <g><circle cx="9" cy="9" r="7.500" fill="#8ccaf7" stroke="#2a7fd0" /><path d="M4 6h7v7H4zM8 9h6v5H8z" fill="#e9f5ff" stroke="#2a7fd0" /></g>,
  paint: <g><path d="M1.500 1.500h15v15h-15z" fill="#2a9e42" stroke="#444" /><path d="M2 2h7v7H2z" fill="#e84020" stroke="none" /><path d="M9 2h7v7H9z" fill="#ffd832" stroke="none" /><path d="M7 6l9 11" stroke="#222" strokeWidth="2" /></g>,
  remote: <g stroke="none"><path d="M8 1L1 9l7 8V12L6 9l2-3z" fill="#7cba3c" /><path d="M9 1l7 4-4 7-2 5h-2l3-8z" fill="#e8e8e8" stroke="#9aa" /><path d="M10 6l5 3-5 6z" fill="#6bb4dd" /></g>,
  folder: <g><path d="M1.500 14.500v-11h5l2 2h7v9z" fill="#f8d060" stroke="#a87820" /><path d="M6 8l7-1v5l-7 2z" fill="#7db9e8" stroke="#fff" /></g>,
  word: <g><path d="M4.500 1.500h12v15h-12z" fill="#fff" stroke="#5577aa" /><path d="M11 5h4M11 8h4M11 11h4M11 14h4" stroke="#77a" /><path d="M.500 3.500h10v10H.500z" fill="#3c72c0" stroke="#fff" /><path d="M2.500 6l1.500 5 1.500-4 1.500 4 1.500-5" stroke="#fff" strokeWidth="1.300" /></g>,
  cad: <g><path d="M0 0h18v18H0z" fill="#fff" stroke="none" /><path d="M2 14L6 3l4 11M3.500 10h5" stroke="#c62828" strokeWidth="2.400" /><path d="M12 9v5M14 9h3v5h-3z" stroke="#b44" /></g>,
  keyboard: <g stroke="#111"><path d="M1.500 7.500h15v8h-15z" fill="#fff" /><path d="M3 10h12M3 12.500h12" strokeDasharray="1 1" strokeWidth="1.500" /><path d="M5 2l2 2h4l2 2" /></g>,
  network: <g stroke="#2c68b8"><path d="M7.500 1.500h9v8h-9z" fill="#8cc8f0" /><path d="M1.500 7.500h9v7h-9zM3 16.500h6" fill="#5aa5e8" /></g>,
  volume: <g><path d="M1.500 6.500h3l5-5v15l-5-5h-3z" fill="#d04020" stroke="#702010" /><path d="M12 4v10M15 2v14" stroke="#902818" strokeWidth="1.500" /></g>,
  speaker: <g stroke="#777"><circle cx="7" cy="8" r="6" fill="#bbb" /><circle cx="7" cy="8" r="3" fill="#888" /><path d="M14 10c2 2 1 5-2 6" stroke="#99e" /></g>,
  monitor: <g><path d="M1.500 2.500h15v10h-15z" fill="#16315c" stroke="#111" /><path d="M4 10V6h3v4M9 9V4h3v5" stroke="#5ab8f8" strokeWidth="2" /><path d="M5 15.500h9" strokeWidth="2" /></g>
}

const Icon = ({ name, size = 18 }) => (
  <Glyph width={size} height={size} viewBox="0 0 18 18" aria-hidden="true">{icons[name]}</Glyph>
)

const caretPaths = {
  down: 'M0 2h8L4 6z',
  up: 'M0 6h8L4 2z',
  left: 'M6 0v8L2 4z',
  right: 'M2 0v8l4-4z',
  first: 'M8 0v8L4 4zM1 0h1v8H1z',
  last: 'M0 0v8l4-4zM6 0h1v8H6z'
}

const Caret = ({ dir = 'down', color = '#000', size = 8 }) => (
  <svg width={size} height={size} viewBox="0 0 8 8" aria-hidden="true"><path d={caretPaths[dir]} fill={color} /></svg>
)

// '|' is a divider, 'v' is a drop-down caret
const Tools = ({ items, vertical, w = 23, caret = 12 }) => items.split(' ').map((name, i) => {
  if (name === '|') return <Divider key={i} $vertical={vertical} />
  if (name === 'v') return <IconButton key={i} $w={caret} aria-label="More"><Caret color="#555" size={6} /></IconButton>
  return <IconButton key={i} $w={w} aria-label={name}><Icon name={name} /></IconButton>
})

const Picker = ({ label, value, w, pad, serif, children }) => (
  <Combo $w={w}>
    {children}
    <ComboSelect aria-label={label} $pad={pad} $serif={serif}><option>{value}</option></ComboSelect>
    <Arrow />
  </Combo>
)

const menus = [
  ['文件', 'F'], ['编辑', 'E'], ['视图', 'V'], ['插入', 'I'], ['格式', 'O'], ['工具', 'T'],
  ['绘图', 'D'], ['标注', 'N'], ['修改', 'M'], ['参数', 'P'], ['窗口', 'W']
]

const history = [
  '命令: z ZOOM',
  '指定窗口的角点，输入比例因子 (nX 或 nXP)，或者',
  '[全部(A)/中心(C)/动态(D)/范围(E)/上一个(P)/比例(S)/窗口(W)/对象(O)] <实时>: e'
]

const Mixed = ({ text }) => text.split(/([\u3000-\uffef]+)/).filter(Boolean).map((part, i) => (
  /[\u3000-\uffef]/.test(part) ? <Han key={i}>{part}</Han> : <Latin key={i}>{part}</Latin>
))

const Controls = () => (
  <WindowControls>
    {['min', 'restore', 'close'].map(name => (
      <IconButton key={name} $w={16} aria-label={name}><Icon name={name} size={15} /></IconButton>
    ))}
  </WindowControls>
)

/* ---------- drawing ---------- */

// small repeatable scatter of line work for the distant sheets
const scatter = (seed, x, y, w, h, count, colors) => {
  let s = seed
  const next = () => {
    s = (s * 16807) % 2147483647
    return s / 2147483647
  }
  return Array.from({ length: count }, (_, i) => {
    const flat = next() > 0.4
    const rw = flat ? 2 + Math.floor(next() * 6) : 1
    const rh = flat ? 1 : 2 + Math.floor(next() * 4)
    return (
      <rect
        key={i}
        x={x + Math.floor(next() * (w - rw))}
        y={y + Math.floor(next() * (h - rh))}
        width={rw}
        height={rh}
        fill={colors[Math.floor(next() * colors.length)]}
      />
    )
  })
}

const CadText = styled.text`
  fill: #fff;
  stroke: #fff;
  stroke-width: 0.3;
  font-family: ${p => p.$family || '"Open Sans", "Liberation Sans", sans-serif'};
  font-size: ${p => p.$size}px;
  font-weight: 300;
  text-anchor: middle;
`

const BubbleDigit = styled.text`
  fill: #000;
  stroke: #fff;
  font-family: "DejaVu Serif", serif;
  font-size: 25px;
  text-anchor: middle;
`

const bubbles = [
  { x: 312, y: 505, digit: '6' },
  { x: 539, y: 505, digit: '7' },
  { x: 599, y: 505, digit: '8' },
  { x: 769, y: 229 },
  { x: 769, y: 293 }
]

const slopeDims = [
  [474, 322, 482, 333], [494, 309, 502, 322], [515, 297, 522, 310],
  [536, 285, 543, 298], [557, 273, 563, 286], [576, 262, 583, 274]
]

const slopeLabels = [
  [491, 325, '620'], [511, 313, '620'], [531, 301, '620'], [551, 290, '625'], [571, 278, '620']
]

const Drawing = () => (
  <Canvas viewBox="59 129 946 477" preserveAspectRatio="xMinYMin slice" shapeRendering="crispEdges" role="img" aria-label="tj-10.20.dwg">
    <g stroke="#999">
      <path d="M539.500 339v151M599.500 339v151M306 445.500h300M633 229.500h122M633 293.500h122M709.500 223v77" />
      <path d="M395.500 295v22M412 316.500h60l101-59" />
      <path d="M919 291.500h84M942.500 268v59" />
    </g>
    <path d="M312.500 339v151" stroke="#0f0" />
    <g stroke="#0f0" strokeWidth="3">
      <path d="M310 448l5-6M537 448l5-6M597 448l5-6M706 226l6 6M706 290l6 6" />
    </g>

    <path d="M396 301.500h74l95-58 31-10" stroke="#ff6" />
    <path d="M396 308.500h74l97-57 30-11M414.500 301v8M565.500 243l2 9" stroke="#ff0" />
    <path d="M412.500 309v8M570 251l3 7" stroke="#00f" strokeWidth="2" />
    <path d="M391 306h5l-2-4 5 5h-3l1 5M594 227l2 6h5l-7 5h7l-1 7M592 235l9 4" stroke="#0f0" />
    <g stroke="#0f0">
      <path d="M409 335.500h67M412.500 322v17M446.500 322v17M473.500 322v17" />
      <path d="M478 336l109-64" stroke="#8b8" />
      {slopeDims.map(([x1, y1, x2, y2]) => (
        <Fragment key={x1}>
          <path d={`M${x1} ${y1}L${x2 + 2} ${y2 + 3}`} />
          <path d={`M${x2 - 2} ${y2}h5`} strokeWidth="3" />
        </Fragment>
      ))}
      <path d="M411 335.500h3M445 335.500h3M472 335.500h3" strokeWidth="3" />
    </g>
    <CadText x="429" y="332" $size={9}>900</CadText>
    <CadText x="459" y="332" $size={9}>690</CadText>
    {slopeLabels.map(([x, y, label]) => (
      <CadText key={x} x={x} y={y} $size={9} transform={`rotate(-30 ${x} ${y})`}>{label}</CadText>
    ))}
    <CadText x="516" y="271" $size={16} transform="rotate(-30 516 271)">MC7</CadText>
    <path d="M528 219h22v21h-22z" fill="#fff" />
    <path d="M548 219h2v21h-2z" fill="#ff0" />

    <CadText x="426" y="440" $size={16}>6000</CadText>
    <CadText x="570" y="440" $size={16}>1600</CadText>
    <CadText x="704" y="262" $size={16} transform="rotate(-90 704 262)">1700</CadText>

    <g shapeRendering="auto">
      {bubbles.map(({ x, y, digit }) => (
        <Fragment key={`${x} ${y}`}>
          <circle cx={x + 0.5} cy={y + 0.5} r="15" stroke="#999" />
          <circle cx={x + 0.5} cy={y + 0.5} r="15" stroke="#0f0" strokeDasharray="14 9.560" strokeDashoffset="7" />
          {digit && <BubbleDigit x={x + 0.5} y={y + 9}>{digit}</BubbleDigit>}
        </Fragment>
      ))}
    </g>
    <CadText x="769" y="238" $size={25} $family={'"Liberation Serif", serif'}>A</CadText>
    <CadText x="769" y="298" $size={12} $family={'"DejaVu Sans Condensed", sans-serif'}>1/0A</CadText>

    <path d="M941 279v32" stroke="#fff" strokeWidth="4" strokeDasharray="2 1" />
    <path d="M945 303v8" stroke="#ff0" strokeWidth="3" />
    <path d="M944 293.500h41" stroke="#ff0" strokeWidth="3" />
    <path d="M944 293.500h41" stroke="#fff" strokeWidth="2" strokeDasharray="2 2" />
    <path d="M970 290.500h11" stroke="#0f0" strokeWidth="2" />
    <path d="M972 287.500h9" stroke="#fff" strokeWidth="3" strokeDasharray="2 1" />
    <circle cx="942" cy="298" r="3" stroke="#f00" />

    <path d="M70.500 457.500h14v12h-14zM86.500 456.500h15v46h-15z" stroke="#999" />
    {scatter(7, 71, 458, 13, 12, 14, ['#888', '#999', '#777'])}
    <path d="M77 462.500h4" stroke="#0ff" strokeWidth="2" />
    {scatter(11, 87, 457, 15, 45, 70, ['#888', '#f33', '#999', '#c7c'])}
    <path d="M62.500 480.500h24v22h-24zM86.500 457v45M105 502.500h61" stroke="#c5f" />
    <path d="M65 482h9v4h6v8M84 485v12M69 488v10M67 498h5M75 497h8" stroke="#888" />
    <path d="M92 455h4" stroke="#f0f" strokeWidth="2" />
    <path d="M105.500 502v-44.500h60V502" stroke="#aaa" />
    <path d="M114 455h33" stroke="#f08878" strokeWidth="2" />
    {scatter(23, 107, 459, 14, 30, 22, ['#f22', '#f22', '#888', '#a3a'])}
    <path d="M123 461.500h15M123 467.500h15M123 481.500h16M123 487.500h16M127 498.500h12M148 498.500h13" stroke="#f22" strokeWidth="2" />
    <path d="M125.500 459v10M135.500 459v10M125.500 478v22M135.500 478v22M144.500 459v8M144.500 480v12M153.500 487v14M117.500 484v14" stroke="#999" />
    <path d="M140 463h6M155 474h8" stroke="#a2e" strokeWidth="2" />
    <path d="M154 478h8M157 474h5" stroke="#00d" strokeWidth="2" />
    <path d="M151 464h4" stroke="#0d4" strokeWidth="2" />
    <path d="M157 464h5" stroke="#fff" strokeWidth="2" />
    <path d="M171.500 459.500h14v5h2v26h-16z" stroke="#ff0" />
    <path d="M170.500 460v31" stroke="#ff0" strokeDasharray="3 1" />
    {scatter(31, 173, 465, 12, 24, 28, ['#f33', '#f33', '#999', '#ff0'])}
    <path d="M174 461h8" stroke="#ff0" strokeWidth="3" />
    <path d="M182 456h4" stroke="#f00" strokeWidth="3" />
    <path d="M187.500 449.500h54v43h-54z" fill="#c66" stroke="#e88" />
    {scatter(47, 188, 450, 54, 42, 420, ['#f33', '#f55', '#999', '#e99', '#533', '#e77'])}
    <path d="M187 492.500h55" stroke="#d7f" />
    <path d="M224 454h4" stroke="#ff0" strokeWidth="4" />

    <g stroke="#fff">
      <path d="M68.500 586.500h9v9h-9zM73.500 591V545M73 590.500h45M69 545.500h9l-4.500-12zM118.500 586v9l12-4.500z" />
      <path d="M73.500 536v9M119 590.500h9" stroke="#999" />
      <path d="M554.500 129v477M59 413.500h946M551.500 410.500h6v6h-6z" />
    </g>
    <CadText x="75" y="525" $size={15}>Y</CadText>
    <CadText x="144" y="596" $size={15}>X</CadText>
    <path d="M554 504v4" stroke="#f0f" strokeWidth="2" />
  </Canvas>
)

const App = () => (
  <Window>
    <GlobalStyle />
    <Header>
      <AppButton aria-label="AutoCAD">
        <svg width="38" height="38" viewBox="0 0 38 38" aria-hidden="true">
          <path d="M4 32L9 10 14 3h6l7 24-5 3-4-6-6 1-2 7-4 2z" fill="#d2232a" />
          <path d="M14 3h6l7 24-5 3z" fill="#a01218" />
          <path d="M13 18l2-7 3 7z" fill="#e8d8d8" />
          <path d="M4 32L9 10l5-7 1 5-5 20z" fill="#ee5a50" />
          <path d="M28 17h7l-3 4z" fill="#333" />
        </svg>
      </AppButton>
      <HeaderBody>
        <TitleRow>
          <QuickAccess><Tools items="new open save undo v redo v print v" /></QuickAccess>
          <Title>AutoCAD 2010    tj-10.20.dwg</Title>
          <SearchBox>
            <IconButton $w={12} aria-label="Expand"><Caret dir="right" /></IconButton>
            <SearchInput aria-label="键入关键字或短语" placeholder="键入关键字或短语" />
            <Tools items="binoculars v key satellite star helpround v" w={22} caret={11} />
          </SearchBox>
          <Controls />
        </TitleRow>
        <MenuRow>
          {menus.map(([label, key]) => (
            <MenuItem key={key}>{label}(<u>{key}</u>)</MenuItem>
          ))}
          <Spacer />
          <Controls />
        </MenuRow>
      </HeaderBody>
    </Header>

    <DockRows>
      <DockRow $end>
        <Bar>
          <Grip />
          <Tools items="track from | endpoint midpoint intersect apparent extension | center quadrant tangent | perp parallel insertion node | nearest nosnap | magnet" />
        </Bar>
      </DockRow>
      <DockRow>
        <Bar>
          <Grip />
          <Tools items="new open save | print preview publish dwf | cut copyclip paste match blockedit | undo v redo v | pan zoom zoomwin zoomprev | props design palettes sheets markup calc | help" />
        </Bar>
        <Bar>
          <Grip />
          <Tools items="textstyle" />
          <Picker label="文字样式" value="ROMANS" w={118} pad={16} />
          <Divider />
          <Tools items="dimstyle" />
          <Picker label="标注样式" value="PISA" w={118} pad={16} />
          <Divider />
          <Tools items="tablestyle" />
          <Picker label="表格样式" value="Standard" w={118} pad={2} />
        </Bar>
      </DockRow>
      <DockRow>
        <Bar>
          <Grip />
          <Picker label="工作空间" value="AutoCAD 经典...AD 2008 移植" w={174} pad={6} />
          <Tools items="gear home" />
        </Bar>
        <Bar>
          <Grip />
          <Tools items="layerprops" />
          <Picker label="图层" value="Defpoints" w={298}>
            {['bulb', 'sun', 'vpfreeze', 'unlock'].map(name => (
              <IconButton key={name} $w={17} aria-label={name}><Icon name={name} size={16} /></IconButton>
            ))}
            <Swatch />
          </Picker>
          <Tools items="layermatch layerprev layerstate" />
        </Bar>
        <Bar>
          <Grip />
          <Picker label="颜色" value="ByLayer" w={149} serif><Swatch $gap={4} /></Picker>
          <Divider />
          <Picker label="线型" value="ByLayer" w={159} serif><Rule $w={60} /></Picker>
          <Divider />
          <Picker label="线宽" value="ByLayer" w={159} serif><Rule $w={35} /></Picker>
        </Bar>
      </DockRow>
    </DockRows>

    <Workspace>
      <SideDock>
        <Bar $vertical>
          <Grip $vertical />
          <Tools vertical items="line xline pline polygon rect arc circle cloud spline ellipse ellipsearc insert block point hatch gradient region table text" />
        </Bar>
        <Bar $vertical>
          <Grip $vertical />
          <Tools vertical items="distance area | list locate" />
        </Bar>
      </SideDock>
      <SideDock>
        <Bar $vertical>
          <Grip $vertical />
          <Tools vertical items="erase copy mirror offset array move rotate scale stretch trim extend breakpt break join chamfer fillet explode" />
        </Bar>
        <Bar $vertical>
          <Grip $vertical />
          <Tools vertical items="front back above under" />
        </Bar>
      </SideDock>
      <RecordMark />
      <Document>
        <Frame>
          <Drawing />
          <ScrollTrack $vertical>
            <ScrollButton aria-label="Up"><Caret dir="up" size={7} /></ScrollButton>
            <Spacer />
            <ScrollButton aria-label="Vertical position" />
            <Spacer />
            <ScrollButton aria-label="Down"><Caret size={7} /></ScrollButton>
          </ScrollTrack>
        </Frame>
        <TabRow>
          <TabArrows>
            {['first', 'left', 'right', 'last'].map(dir => (
              <ScrollButton key={dir} $w={14} aria-label={`Tab ${dir}`}><Caret dir={dir} color="#777" /></ScrollButton>
            ))}
          </TabArrows>
          <Tab $active>模型</Tab>
          <Tab>布局1</Tab>
          <Spacer />
          <Splitter />
          <ScrollButton aria-label="Left"><Caret dir="left" size={7} /></ScrollButton>
          <ScrollTrack $w="29.5%">
            <Spacer />
            <ScrollButton aria-label="Horizontal position" />
            <Spacer />
          </ScrollTrack>
          <ScrollButton aria-label="Right"><Caret dir="right" size={7} /></ScrollButton>
          <Corner />
        </TabRow>
        <DimensionDock>
          <Bar>
            <Grip />
            <Tools items="dlinear daligned darc dordinate | dradius djog ddiameter dangular | dquick dbaseline dcontinue dspace dbreak | tolerance centermark inspect jogline | dimedit dimtext dimupdate |" />
            <Picker label="标注样式" value="PISA" w={118} pad={16} />
            <Tools items="dimstyle" />
          </Bar>
        </DimensionDock>
      </Document>
    </Workspace>

    <Command>
      <CommandGrip />
      <CommandBody>
        <History>
          <HistoryText>
            {history.map(line => <Line key={line}><Mixed text={line} /></Line>)}
          </HistoryText>
          <ScrollTrack $vertical>
            <ScrollButton aria-label="Up"><Caret dir="up" size={7} /></ScrollButton>
            <Spacer />
            <ScrollButton aria-label="Down"><Caret size={7} /></ScrollButton>
          </ScrollTrack>
        </History>
        <Prompt>
          <Line as="label" htmlFor="prompt"><Mixed text="命令:" /></Line>
          <PromptInput id="prompt" />
          <ScrollButton $h={15} aria-label="Left"><Caret dir="left" size={7} /></ScrollButton>
          <ScrollTrack $w="29px">
            <ScrollButton $h={15} aria-label="Position" />
          </ScrollTrack>
          <ScrollButton $h={15} aria-label="Right"><Caret dir="right" size={7} /></ScrollButton>
          <Corner />
        </Prompt>
      </CommandBody>
    </Command>

    <StatusBar>
      <Coordinates>63403.8, 18663.6, 0.0</Coordinates>
      {['snap', 'grid', 'ortho', 'polar', 'osnap', 'otrack', 'ducs', 'dyn', 'lwt', 'qp'].map(name => (
        <StatusButton key={name} aria-label={name} $on={name === 'ortho' || name === 'osnap'}>
          <Icon name={name} size={16} />
        </StatusButton>
      ))}
      <StatusGap $grow />
      <StatusButton $w={30}>模型</StatusButton>
      <StatusButton aria-label="layout"><Icon name="layout" size={16} /></StatusButton>
      <StatusButton aria-label="views"><Icon name="views" size={16} /></StatusButton>
      <StatusGap $w={18} />
      {['pan', 'zoom', 'wheel', 'motion'].map(name => (
        <StatusButton key={name} aria-label={name}><Icon name={name} size={16} /></StatusButton>
      ))}
      <StatusGap $w={18} />
      <StatusButton $w={54}><Icon name="anno" size={16} /><MonoLabel>1:1</MonoLabel><Caret /></StatusButton>
      <StatusButton aria-label="annostar"><Icon name="annostar" size={16} /></StatusButton>
      <StatusButton aria-label="annoauto"><Icon name="annoauto" size={16} /></StatusButton>
      <StatusGap $w={6} />
      <StatusButton $w={186}>
        <Icon name="gear" size={16} />
        <MonoLabel>AutoCAD 经典 - 已从 AutoC</MonoLabel>
        <Caret />
      </StatusButton>
      <StatusButton aria-label="lock"><Icon name="lock" size={16} /></StatusButton>
      <StatusButton aria-label="drawing" $w={31} $on><Icon name="drawing" size={18} /></StatusButton>
      <StatusButton aria-label="More" $w={14}><Caret size={6} /></StatusButton>
      <StatusButton aria-label="clean" $w={20}><Icon name="clean" size={16} /></StatusButton>
    </StatusBar>

    <Taskbar>
      <StartButton><Icon name="windows" size={17} />开始</StartButton>
      <QuickLaunch>
        <Icon name="ie" size={16} />
        <Icon name="outlook" size={16} />
        <Icon name="paint" size={17} />
        <b>»</b>
      </QuickLaunch>
      <Task><Icon name="remote" size={16} />好视通桌面终端</Task>
      <Task $active $latin><Icon name="cad" size={16} />AutoCAD 2010 - [tj-10.2...</Task>
      <Task><Icon name="folder" size={16} />陶</Task>
      <Task><Icon name="word" size={16} />玻璃幕墙工程技术规范...</Task>
      <Spacer />
      <Icon name="keyboard" size={17} />
      <Divider />
      <Tray>
        {['network', 'volume', 'speaker', 'monitor'].map(name => <Icon key={name} name={name} size={16} />)}
        <Clock>16:06</Clock>
      </Tray>
    </Taskbar>
  </Window>
)

export default App
